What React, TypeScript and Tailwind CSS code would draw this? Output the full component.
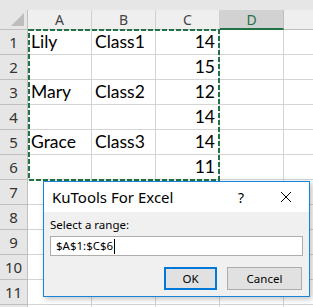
import React from "react";

const data: string[][] = [
  ["Lily", "Class1", "14"],
  ["", "", "15"],
  ["Mary", "Class2", "12"],
  ["", "", "14"],
  ["Grace", "Class3", "14"],
  ["", "", "11"],
  ["", "", ""],
  ["", "", ""],
  ["", "", ""],
  ["", "", ""],
  ["", "", ""],
  ["", "", ""],
];

const cellFont = { fontFamily: "Lato, 'Open Sans', sans-serif" };
const uiFont = { fontFamily: "'Noto Sans', 'Open Sans', sans-serif" };

export default function App() {
  return (
    <div className="relative w-[313px] h-[307px] overflow-hidden bg-white">
      {/* top band */}
      <div className="h-[10px] bg-[#e6e6e6]" />
      {/* header row */}
      <div className="flex h-[20px] bg-[#efefef]" style={uiFont}>
        <div className="w-[28px] shrink-0 border-r border-b border-[#bfbfbf] bg-[#e6e6e6] relative">
          <svg width="14" height="14" className="absolute left-[11px] top-[3px]">
            <polygon points="13,0 13,13 0,13" fill="#bdbdbd" />
          </svg>
        </div>
        {["A", "B", "C"].map((c) => (
          <div
            key={c}
            className="w-[64px] shrink-0 border-r border-b border-r-[#d0d0d0] border-b-[#bfbfbf] flex items-center justify-center text-[14px] text-[#444]"
          >
            {c}
          </div>
        ))}
        <div className="w-[64px] shrink-0 border-r border-r-[#bfbfbf] border-b-2 border-b-[#217346] bg-[#d2d2d2] flex items-center justify-center text-[14px] text-[#217346]">
          D
        </div>
        <div className="flex-1 border-b border-[#bfbfbf]" />
      </div>
      {/* rows */}
      {data.map((r, i) => (
        <div key={i} className="flex h-[25px]">
          <div
            className="w-[28px] shrink-0 border-r border-b border-[#bfbfbf] bg-[#e6e6e6] flex items-center justify-center text-[15px] text-[#333]"
            style={uiFont}
          >
            {i < 11 ? i + 1 : ""}
          </div>
          <div className="w-[64px] shrink-0 border-r border-b border-[#d4d4d4] flex items-center pl-[3px] text-[17.5px] text-black" style={cellFont}>
            {r[0]}
          </div>
          <div className="w-[64px] shrink-0 border-r border-b border-[#d4d4d4] flex items-center pl-[3px] text-[17.5px] text-black" style={cellFont}>
            {r[1]}
          </div>
          <div className="w-[64px] shrink-0 border-r border-b border-[#d4d4d4] flex items-center justify-end pr-[4px] text-[17.5px] text-black" style={cellFont}>
            {r[2]}
          </div>
          <div className="w-[64px] shrink-0 border-r border-b border-[#d4d4d4]" />
          <div className="flex-1 border-b border-[#d4d4d4]" />
        </div>
      ))}

      {/* marching ants */}
      <svg className="absolute left-[28px] top-[29px]" width="192" height="152">
        <rect x="1" y="1" width="190" height="150" fill="none" stroke="#217346" strokeWidth="2" strokeDasharray="5 2" />
      </svg>

      {/* dialog */}
      <div
        className="absolute left-[43px] top-[181px] w-[267px] h-[116px] border border-[#1883d7] bg-[#f0f0f0] shadow-[2px_2px_6px_rgba(0,0,0,0.25)] flex flex-col"
        style={uiFont}
      >
        <div className="h-[30px] shrink-0 bg-white flex items-center pl-[8px] pr-[17px] text-[15px] text-black">
          <span className="flex-1">KuTools For Excel</span>
          <span className="w-[16px] text-center mr-[31px] text-[14px]">?</span>
          <svg width="12" height="12" viewBox="0 0 12 12">
            <path d="M1 1 L11 11 M11 1 L1 11" stroke="#000" strokeWidth="1" />
          </svg>
        </div>
        <div className="flex flex-col px-[6px] pt-[5px]">
          <div className="text-[11.5px] text-black leading-[16px]">Select a range:</div>
          <div className="mt-[3px] h-[20px] w-[253px] border border-[#adadad] bg-white flex items-center pl-[5px] text-[11.5px] text-black">
            $A$1:$C$6
            <span className="inline-block w-px h-[15px] bg-black ml-px" />
          </div>
          <div className="mt-[11px] flex justify-end gap-[10px] pr-[1px]">
            <div className="w-[53px] h-[23px] border-2 border-[#0078d7] bg-[#e1e1e1] flex items-center justify-center text-[11.5px] text-black">
              OK
            </div>
            <div className="w-[75px] h-[23px] border border-[#adadad] bg-[#e1e1e1] flex items-center justify-center text-[11.5px] text-black">
              Cancel
            </div>
          </div>
        </div>
      </div>
    </div>
  );
}
